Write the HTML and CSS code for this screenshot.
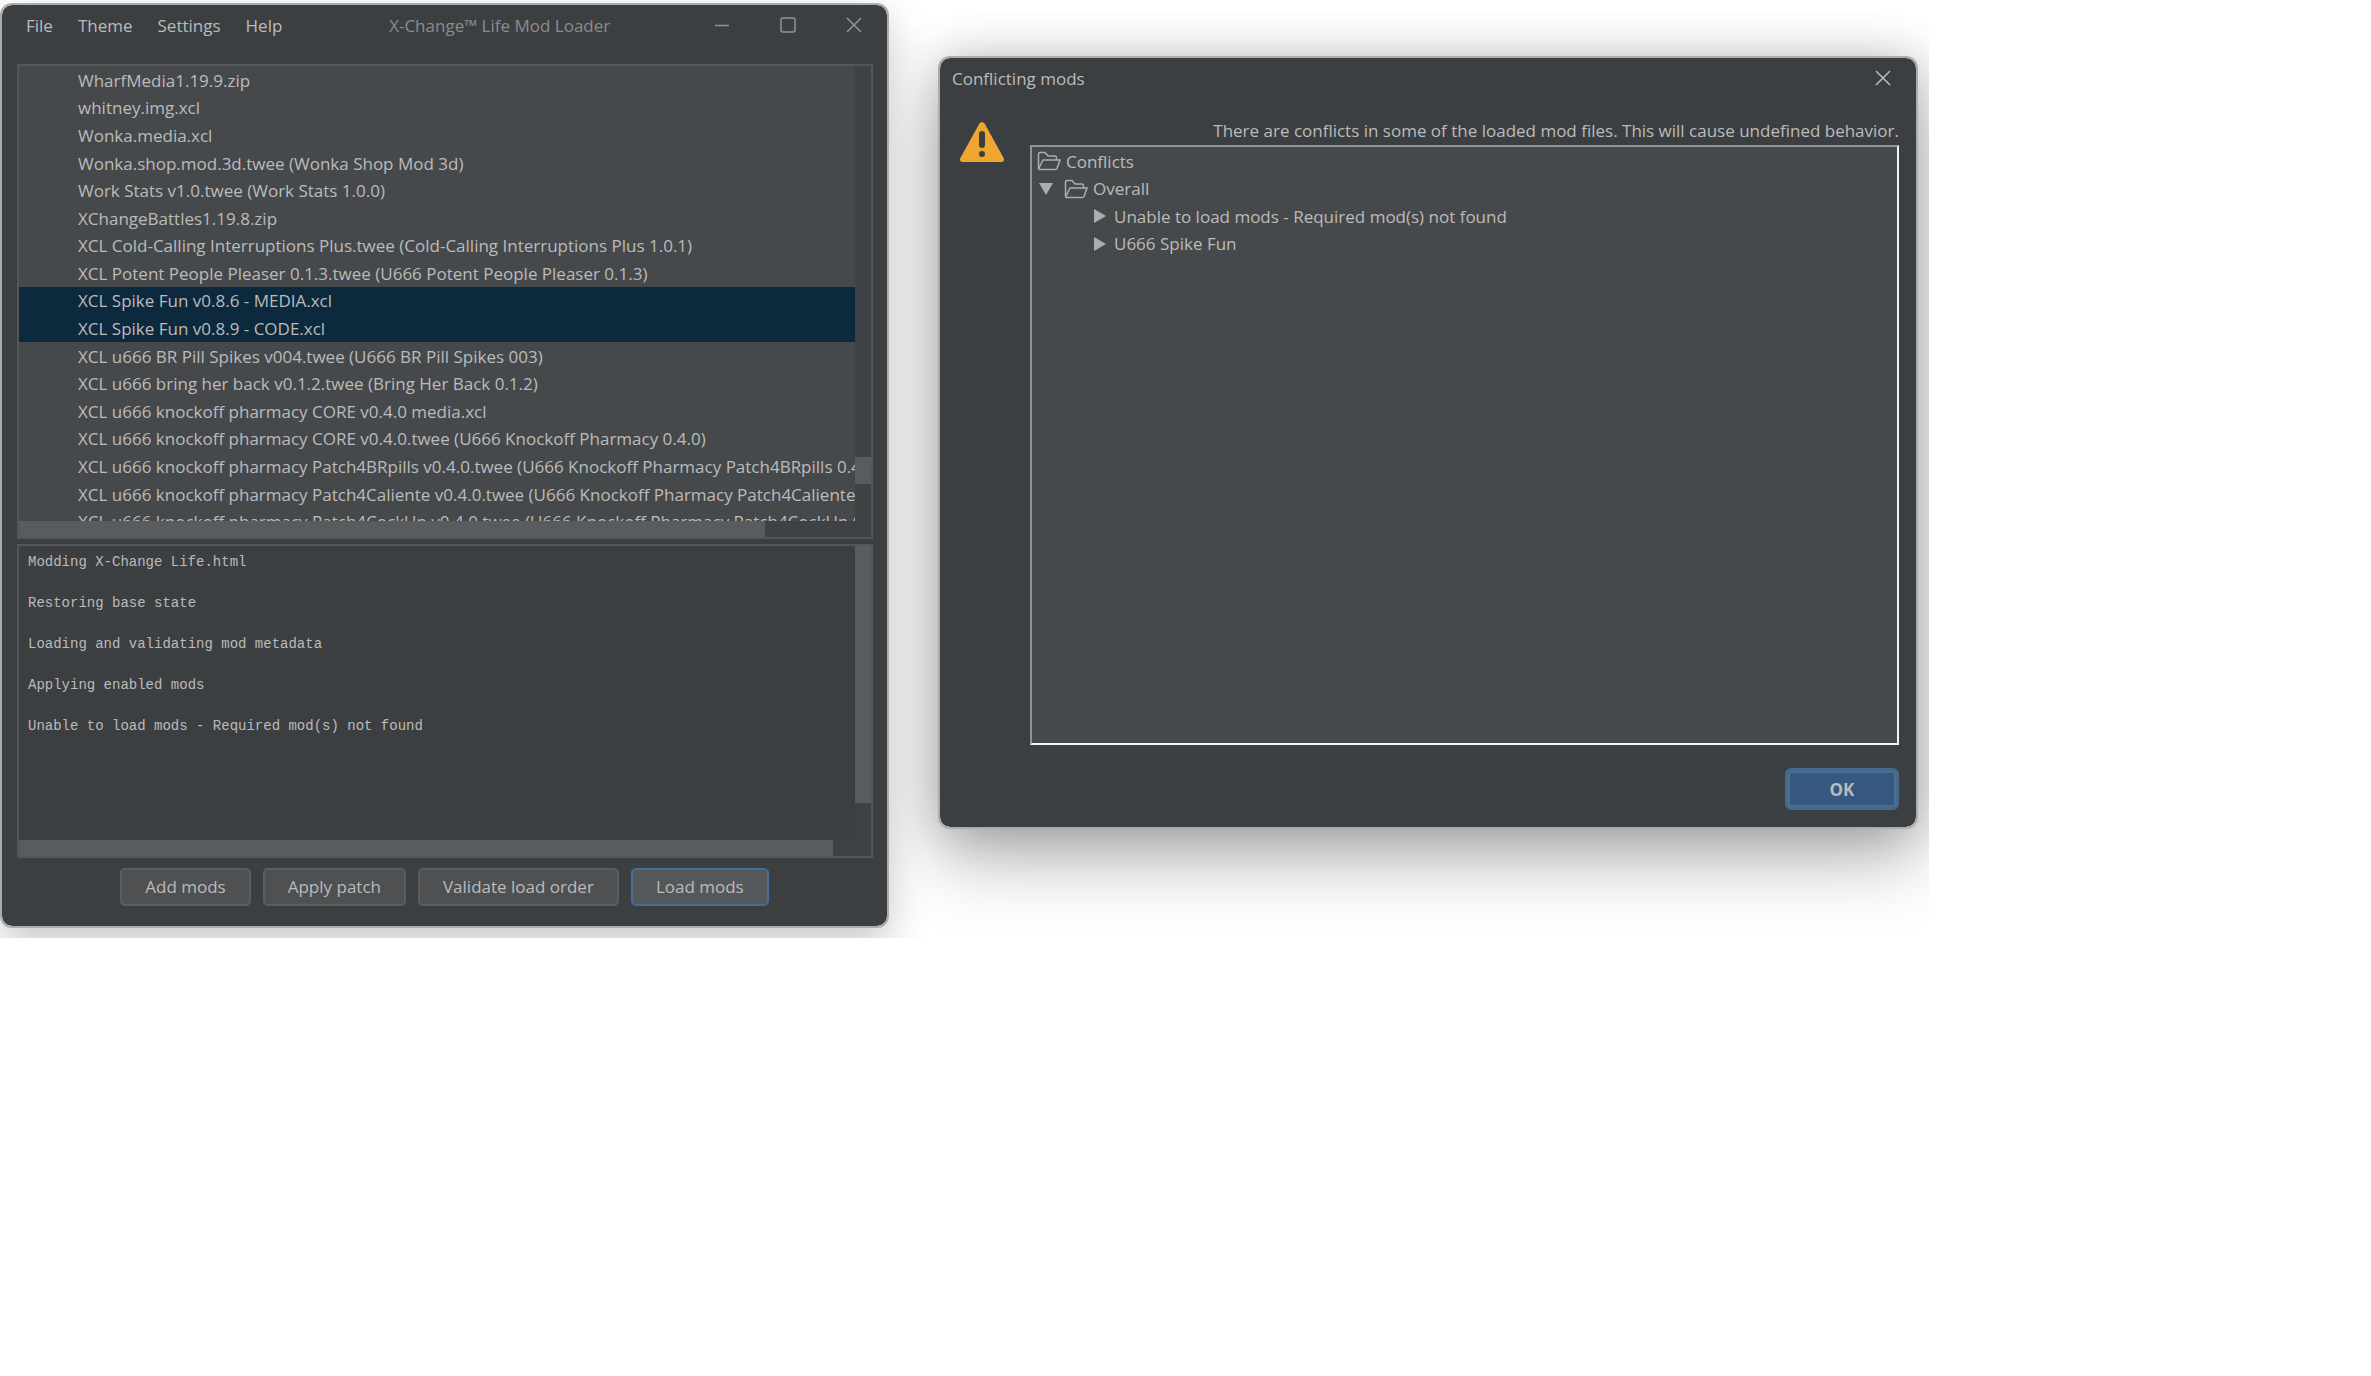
FILE: index.html
```html
<!DOCTYPE html>
<html lang="en">
<head>
    <meta charset="UTF-8">
    <meta name="viewport" content="width=device-width, initial-scale=1.0">
    <title>X-Change™ Life Mod Loader</title>
    <link rel="stylesheet" href="styles.css">
</head>
<body>
    <div class="desktop">
        <main class="window loader">
            <header class="titlebar">
                <nav class="menu">
                    <button type="button">File</button>
                    <button type="button">Theme</button>
                    <button type="button">Settings</button>
                    <button type="button">Help</button>
                </nav>
                <h1 class="app-title">X-Change™ Life Mod Loader</h1>
                <div class="controls">
                    <button type="button" aria-label="Minimize">
                        <svg width="16" height="16" viewBox="0 0 16 16"><path d="M1 8.500h14"/></svg>
                    </button>
                    <button type="button" aria-label="Maximize">
                        <svg width="16" height="16" viewBox="0 0 16 16"><rect x="1" y="1" width="14" height="14" rx="2"/></svg>
                    </button>
                    <button type="button" aria-label="Close">
                        <svg width="16" height="16" viewBox="0 0 16 16"><path d="M1 1l14 14M15 1L1 15"/></svg>
                    </button>
                </div>
            </header>

            <section class="panel mods">
                <div class="viewport">
                    <ul class="mod-list">
                        <li>WharfMedia1.19.9.zip</li>
                        <li>whitney.img.xcl</li>
                        <li>Wonka.media.xcl</li>
                        <li>Wonka.shop.mod.3d.twee (Wonka Shop Mod 3d)</li>
                        <li>Work Stats v1.0.twee (Work Stats 1.0.0)</li>
                        <li>XChangeBattles1.19.8.zip</li>
                        <li>XCL Cold-Calling Interruptions Plus.twee (Cold-Calling Interruptions Plus 1.0.1)</li>
                        <li>XCL Potent People Pleaser 0.1.3.twee (U666 Potent People Pleaser 0.1.3)</li>
                        <li class="selected">XCL Spike Fun v0.8.6 - MEDIA.xcl</li>
                        <li class="selected">XCL Spike Fun v0.8.9 - CODE.xcl</li>
                        <li>XCL u666 BR Pill Spikes v004.twee (U666 BR Pill Spikes 003)</li>
                        <li>XCL u666 bring her back v0.1.2.twee (Bring Her Back 0.1.2)</li>
                        <li>XCL u666 knockoff pharmacy CORE v0.4.0 media.xcl</li>
                        <li>XCL u666 knockoff pharmacy CORE v0.4.0.twee (U666 Knockoff Pharmacy 0.4.0)</li>
                        <li>XCL u666 knockoff pharmacy Patch4BRpills v0.4.0.twee (U666 Knockoff Pharmacy Patch4BRpills 0.4.0)</li>
                        <li>XCL u666 knockoff pharmacy Patch4Caliente v0.4.0.twee (U666 Knockoff Pharmacy Patch4Caliente 0.4.0)</li>
                        <li>XCL u666 knockoff pharmacy Patch4CockUp v0.4.0.twee (U666 Knockoff Pharmacy Patch4CockUp 0.4.0)</li>
                    </ul>
                </div>
                <div class="vbar"><div class="thumb"></div></div>
                <div class="hbar"><div class="thumb"></div></div>
            </section>

            <section class="panel log">
                <div class="viewport">
                    <p>Modding X-Change Life.html</p>
                    <p>Restoring base state</p>
                    <p>Loading and validating mod metadata</p>
                    <p>Applying enabled mods</p>
                    <p>Unable to load mods - Required mod(s) not found</p>
                </div>
                <div class="vbar"><div class="thumb"></div></div>
                <div class="hbar"><div class="thumb"></div></div>
            </section>

            <footer class="actions">
                <button type="button" class="btn">Add mods</button>
                <button type="button" class="btn">Apply patch</button>
                <button type="button" class="btn">Validate load order</button>
                <button type="button" class="btn default">Load mods</button>
            </footer>
        </main>

        <section class="window dialog" role="dialog" aria-labelledby="dialog-title">
            <header class="titlebar">
                <h2 id="dialog-title">Conflicting mods</h2>
                <div class="controls">
                    <button type="button" aria-label="Close">
                        <svg width="16" height="16" viewBox="0 0 16 16"><path d="M1 1l14 14M15 1L1 15"/></svg>
                    </button>
                </div>
            </header>

            <div class="dialog-body">
                <svg class="warning" width="46" height="40" viewBox="0 0 46 40">
                    <path d="M20.400 1.500Q23-1.500 25.600 1.500L44.600 36Q46 40 42.500 40H3.500Q0 40 1.400 36Z" fill="#f0a732"/>
                    <rect x="20" y="9" width="6" height="17" rx="3" fill="#3c3f41"/>
                    <circle cx="23" cy="32" r="3" fill="#3c3f41"/>
                </svg>
                <div class="conflicts">
                    <p class="message">There are conflicts in some of the loaded mod files. This will cause undefined behavior.</p>
                    <ul class="tree">
                        <li>
                            <svg class="folder" width="24" height="20" viewBox="0 0 24 20"><path d="M1.500 18V3q0-1.500 1.500-1.500h5l3 3.500h7q1.500 0 1.500 1.500V9M1.500 18L6 9h17l-3 8.500q-.5 1-1.500 1H2.500q-1 0-1-1"/></svg>
                            Conflicts
                        </li>
                        <li>
                            <button type="button" class="toggle" aria-label="Collapse">
                                <svg width="14" height="14" viewBox="0 0 14 14"><path d="M0 1h14L7 13z"/></svg>
                            </button>
                            <svg class="folder" width="24" height="20" viewBox="0 0 24 20"><path d="M1.500 18V3q0-1.500 1.500-1.500h5l3 3.500h7q1.500 0 1.500 1.500V9M1.500 18L6 9h17l-3 8.500q-.5 1-1.500 1H2.500q-1 0-1-1"/></svg>
                            Overall
                        </li>
                        <li class="child">
                            <button type="button" class="toggle" aria-label="Expand">
                                <svg width="14" height="14" viewBox="0 0 14 14"><path d="M1 0v14L13 7z"/></svg>
                            </button>
                            Unable to load mods - Required mod(s) not found
                        </li>
                        <li class="child">
                            <button type="button" class="toggle" aria-label="Expand">
                                <svg width="14" height="14" viewBox="0 0 14 14"><path d="M1 0v14L13 7z"/></svg>
                            </button>
                            U666 Spike Fun
                        </li>
                    </ul>
                </div>
            </div>

            <footer class="dialog-actions">
                <button type="button" class="ok">OK</button>
            </footer>
        </section>
    </div>
</body>
</html>
```

FILE: styles.css
```css
* {
    box-sizing: border-box;
}
body {
    margin: 0;
    background-color: #fff;
    color: #bbb;
    font-family: "Open Sans", "Noto Sans", sans-serif;
    font-size: 17px;
}
h1, h2, p, ul {
    margin: 0;
    padding: 0;
    font-size: 17px;
    font-weight: normal;
}
ul {
    list-style: none;
}
button {
    border: 0;
    padding: 0;
    background: none;
    color: inherit;
    font: inherit;
}

/* Desktop */
.desktop {
    display: grid;
    grid-template-columns: 889fr 980fr;
    align-items: start;
    gap: 49px;
    max-width: 1929px;
    padding: 3px 11px 10px 0;
    overflow: hidden;
}
.window {
    min-width: 0;
    border: 2px solid #acacac;
    border-radius: 12px;
    background-color: #3c3f41;
    background-clip: padding-box;
}
.loader {
    z-index: 1;
    box-shadow: 0 16px 40px rgba(0, 0, 0, 0.22);
}
.dialog {
    margin-top: 53px;
    box-shadow: 0 32px 72px rgba(0, 0, 0, 0.28), 0 2px 48px rgba(0, 0, 0, 0.2);
}

/* Title bars */
.titlebar {
    display: flex;
    align-items: center;
    height: 40px;
}
.menu {
    display: flex;
    gap: 25px;
    padding: 0 28px 0 24px;
}
.app-title {
    flex: 1;
    color: #8a8c8d;
    text-align: center;
    white-space: nowrap;
}
.titlebar h2 {
    flex: 1;
    padding-left: 12px;
}
.controls {
    display: flex;
}
.controls button {
    display: flex;
    align-items: center;
    justify-content: center;
    width: 66px;
    height: 40px;
}
.controls svg {
    fill: none;
    stroke: #929394;
    stroke-width: 1.5;
}
.dialog .controls svg {
    stroke: #bbb;
}

/* Scrolling panels */
.panel {
    display: grid;
    grid-template-columns: minmax(0, 1fr) 16px;
    grid-template-rows: 1fr 16px;
    margin: 0 14px 5px 15px;
    border: 2px solid #535658;
}
.viewport {
    overflow: hidden;
}
.vbar, .hbar {
    background-color: #3f4244;
}
.hbar {
    grid-column: 1 / 3;
}
.thumb {
    background-color: #585c5f;
}
.hbar .thumb {
    height: 16px;
}
.mods {
    height: 475px;
    margin-top: 19px;
    background-color: #46494b;
}
.mod-list {
    display: grid;
    grid-auto-rows: 1fr;
    height: 469px;
}
.mod-list li {
    display: flex;
    align-items: center;
    padding-top: 1px;
    padding-left: 59px;
    white-space: nowrap;
}
.mod-list .selected {
    background-color: #0d293e;
}
.mods .vbar {
    padding-top: 391px;
}
.mods .vbar .thumb {
    height: 27px;
}
.mods .hbar .thumb {
    width: 746px;
    max-width: 88%;
}
.log {
    height: 314px;
}
.log .viewport {
    padding: 6px 9px;
}
.log p {
    margin-bottom: 21px;
    font-family: "Liberation Mono", monospace;
    font-size: 14px;
    line-height: 20px;
}
.log .vbar .thumb {
    height: 257px;
}
.log .hbar .thumb {
    width: 814px;
    max-width: 96%;
}

/* Buttons */
.actions {
    display: flex;
    justify-content: center;
    gap: 12px;
    padding: 5px 0 20px;
}
.btn {
    height: 38px;
    padding: 0 23px 1px;
    border: 2px solid #5b5d5f;
    border-radius: 5px;
    background-color: #4e5052;
}
.default {
    border-color: #466d94;
    background-color: #55585a;
}

/* Dialog */
.dialog-body {
    display: flex;
    padding: 19px 17px 0 19px;
}
.warning {
    flex: none;
    margin: 5px 25px 0 0;
}
.conflicts {
    flex: 1;
}
.message {
    line-height: 28px;
    text-align: right;
    white-space: nowrap;
}
.tree {
    display: grid;
    grid-template-rows: 28px 27px 28px 27px;
    height: 600px;
    padding: 0 5px;
    border: 2px solid;
    border-color: #929394 #f4f4f4 #f4f4f4 #929394;
    background-color: #46494b;
}
.tree li {
    display: flex;
    align-items: center;
}
.tree .child {
    padding-left: 56px;
}
.folder {
    margin-right: 5px;
    fill: none;
    stroke: #adadad;
    stroke-width: 1.5;
}
.toggle {
    display: flex;
    margin: 0 11px 0 2px;
}
.child .toggle {
    margin: 0 7px 0 0;
}
.toggle svg {
    fill: #adadad;
}
.dialog-actions {
    display: flex;
    justify-content: flex-end;
    padding: 23px 17px 17px;
}
.ok {
    width: 114px;
    height: 42px;
    border: 3px solid #43698e;
    border-radius: 6px;
    background-color: #365880;
    box-shadow: inset 0 0 0 2px #4c708c;
    font-weight: bold;
}
```
